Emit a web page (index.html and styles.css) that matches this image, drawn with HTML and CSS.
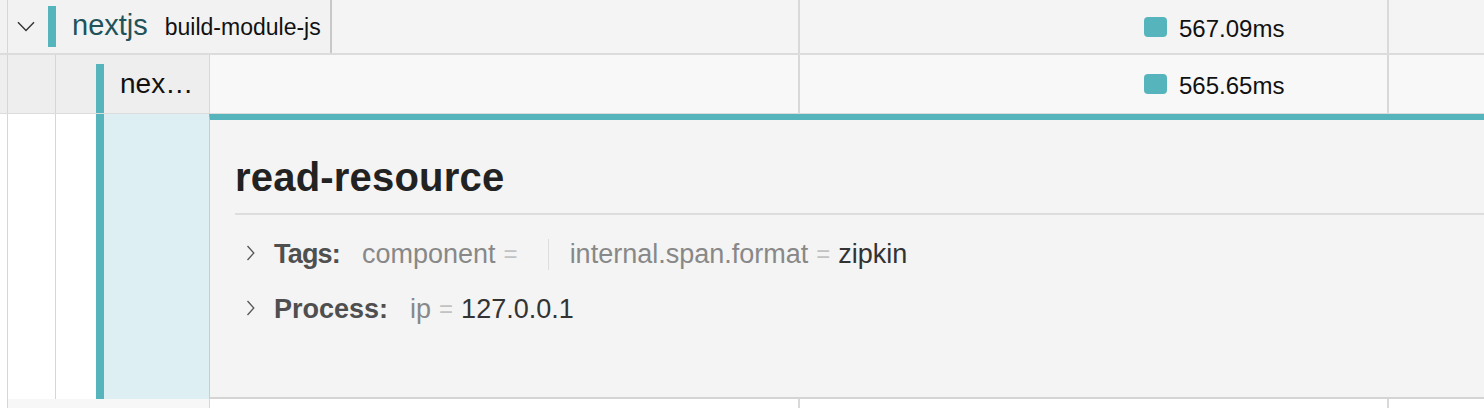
FILE: index.html
```html
<!DOCTYPE html>
<html lang="en">
<head>
<meta charset="utf-8">
<title>Trace detail</title>
<link rel="stylesheet" href="styles.css">
</head>
<body>
<div class="trace">
  <div class="row row--parent">
    <div class="name-cell name-cell--wide">
      <span class="guide"></span>
      <span class="toggle">
        <svg width="18" height="11" viewBox="0 0 18 11"><polyline points="1,1.2 9,9.4 17,1.2" fill="none" stroke="#333" stroke-width="1.4"/></svg>
      </span>
      <span class="color-bar color-bar--short"></span>
      <span class="span-label">
        <span class="service">nextjs</span>
        <span class="operation">build-module-js</span>
      </span>
    </div>
    <div class="timeline">
      <div class="span-bar" style="left:1144px"><i class="swatch"></i><span class="dur">567.09ms</span></div>
    </div>
  </div>

  <div class="row row--child">
    <div class="name-cell name-cell--child">
      <span class="guide"></span>
      <span class="guide guide--wide"></span>
      <span class="indent"></span>
      <span class="color-bar color-bar--open"></span>
      <span class="child-name">nex…</span>
    </div>
    <div class="timeline">
      <div class="span-bar" style="left:1144px"><i class="swatch"></i><span class="dur">565.65ms</span></div>
    </div>
  </div>

  <div class="row row--detail">
    <div class="detail-gutter">
      <span class="guide"></span>
      <span class="guide guide--wide"></span>
      <span class="indent"></span>
      <span class="color-bar color-bar--full"></span>
      <span class="gutter-fill"></span>
    </div>
    <div class="detail-panel">
      <h2 class="detail-title">read-resource</h2>
      <div class="kv-section kv-section--tags">
        <svg class="chev" width="9" height="16" viewBox="0 0 9 16"><polyline points="1.5,1 7.8,8 1.5,15" fill="none" stroke="#555" stroke-width="1.3"/></svg>
        <span class="kv-label">Tags:</span>
        <span class="kv kv--first"><span class="k">component</span><span class="eq">=</span><span class="v"></span></span>
        <span class="kv-sep"></span>
        <span class="kv"><span class="k">internal.span.format</span><span class="eq">=</span><span class="v">zipkin</span></span>
      </div>
      <div class="kv-section">
        <svg class="chev" width="9" height="16" viewBox="0 0 9 16"><polyline points="1.5,1 7.8,8 1.5,15" fill="none" stroke="#555" stroke-width="1.3"/></svg>
        <span class="kv-label">Process:</span>
        <span class="kv kv--first"><span class="k">ip</span><span class="eq">=</span><span class="v">127.0.0.1</span></span>
      </div>
    </div>
  </div>

  <div class="row row--next">
    <div class="name-cell name-cell--next">
      <span class="guide guide--light"></span>
    </div>
    <div class="timeline"></div>
  </div>
</div>
</body>
</html>
```

FILE: styles.css
```css
* { box-sizing: border-box; }
html, body { margin: 0; padding: 0; }
body {
  width: 1484px;
  height: 408px;
  overflow: hidden;
  background: #fff;
  font-family: "Liberation Sans", Arial, Helvetica, sans-serif;
  color: #111;
}

.trace { display: flex; flex-direction: column; width: 1484px; }

.row {
  position: relative;
  display: flex;
  background-image: linear-gradient(#d9d9d9, #d9d9d9), linear-gradient(#d9d9d9, #d9d9d9);
  background-size: 2px 100%, 2px 100%;
  background-position: 798px 0, 1387px 0;
  background-repeat: no-repeat;
}

.row--parent { height: 55px; border-bottom: 2px solid #dcdcdc; background-color: #f4f4f4; }
.row--child { height: 59px; border-bottom: 1px solid #dcdcdc; background-color: #f8f8f8; }
.row--detail { height: 285px; background-color: #fff; }
.row--next { height: 9px; background-color: #fff; }

.name-cell { display: flex; align-items: center; height: 100%; flex: none; }
.name-cell--wide { width: 332px; background: #f2f2f2; border-right: 2px solid #c8c8c8; }
.name-cell--child { width: 210px; background: #eeeeee; border-right: 1px solid #d8d8d8; }
.name-cell--next { width: 210px; background: #f7f7f7; border-right: 1px solid #d8d8d8; }

.timeline { flex: 1; height: 100%; }

.guide { align-self: stretch; flex: none; width: 8px; border-right: 1px solid #d6d6d6; }
.guide--wide { width: 48px; }
.guide--light { background: #fff; }
.indent { flex: none; width: 40px; align-self: stretch; }

.toggle { display: flex; margin-left: 9px; flex: none; }
.toggle svg { display: block; }

.color-bar { flex: none; width: 8px; background: #55b4bc; }
.color-bar--short { height: 41px; margin-left: 13px; }
.color-bar--open { align-self: stretch; margin-top: 9px; }
.color-bar--full { align-self: stretch; }

.span-label { display: flex; align-items: baseline; margin-left: 16px; margin-bottom: 3px; white-space: nowrap; }
.service { font-size: 29px; color: #21525a; }
.operation { font-size: 23px; color: #111; margin-left: 17px; }

.child-name { margin-left: 16px; font-size: 28px; color: #111; white-space: nowrap; }

.span-bar { position: absolute; top: 0; bottom: 0; display: flex; align-items: center; }
.swatch { display: block; width: 23px; height: 20px; border-radius: 4px; background: #55b4bc; }
.dur { margin-left: 12px; font-size: 24px; padding-top: 4px; color: #111; }

.detail-gutter { display: flex; width: 209px; flex: none; height: 100%; background: #fff; }
.gutter-fill { flex: 1; background: #ddeff2; }

.detail-panel {
  flex: 1;
  height: 100%;
  background: #f4f4f4;
  border-left: 1px solid #cccccc;
  border-top: 6px solid #55b4bc;
  border-bottom: 2px solid #d4d4d4;
  padding: 33px 0 0 25px;
}

.detail-title {
  margin: 0;
  font-size: 40px;
  line-height: 48px;
  font-weight: bold;
  color: #222;
  letter-spacing: 0.2px;
  padding-bottom: 12px;
  border-bottom: 2px solid #dddddd;
}

.kv-section {
  display: flex;
  align-items: center;
  height: 32px;
  line-height: 32px;
  font-size: 27px;
  margin-top: 23px;
  white-space: nowrap;
}
.chev { display: block; margin-left: 11px; margin-bottom: 3px; flex: none; }
.kv-label { margin-left: 19px; font-weight: bold; color: #4f4f4f; }
.kv-section--tags .kv-label { letter-spacing: -0.8px; }
.kv { display: flex; align-items: center; }
.kv--first { margin-left: 22px; }
.k { color: #888; }
.eq { color: #c2c2c2; font-size: 24px; margin: 0 8px; }
.v { color: #333; }
.kv-sep { width: 1px; height: 31px; background: #dddddd; margin: 0 21px 0 22px; }
```
